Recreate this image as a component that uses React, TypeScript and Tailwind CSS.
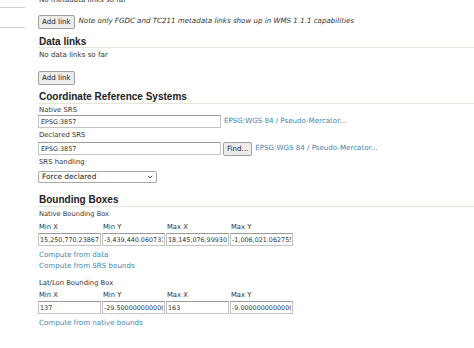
import React from "react";

const link = "text-[#3f88b0]";

function Heading({ children, className = "" }: { children: React.ReactNode; className?: string }) {
  return (
    <div
      className={`border-b border-[#e6e6d6] pl-[1px] text-[10px] font-bold text-[#222] ${className}`}
      style={{ fontFamily: "'Liberation Sans', Arial, sans-serif" }}
    >
      {children}
    </div>
  );
}

function Btn({ children, className = "" }: { children: React.ReactNode; className?: string }) {
  return (
    <button
      className={`h-[14px] rounded-[2px] border border-[#a0a0a0] bg-[#ececec] px-[3px] text-[7.1px] leading-[12px] text-[#222] ${className}`}
      style={{ fontFamily: "'DejaVu Sans', sans-serif" }}
    >
      {children}
    </button>
  );
}

function Field({ value, w, px = "px-[2px]" }: { value: string; w: string; px?: string }) {
  return (
    <input
      readOnly
      value={value}
      className={`${w} ${px} block h-[13px] border border-[#c4c4c4] border-t-[#9a9a9a] bg-white text-[6.4px] leading-[11px] text-[#333] outline-none`}
      style={{ fontFamily: "'DejaVu Sans', sans-serif" }}
    />
  );
}

function BBox({ values }: { values: string[] }) {
  const labels = ["Min X", "Min Y", "Max X", "Max Y"];
  return (
    <div className="grid grid-cols-[63px_63px_63px_63px] gap-x-px">
      {labels.map((l) => (
        <div key={l} className="h-[10px] pl-[1px] text-[6.8px] leading-[10px]">{l}</div>
      ))}
      {values.map((v, i) => (
        <div key={i} className="mt-[1px]"><Field value={v} w="w-[63px]" px="px-[1px]" /></div>
      ))}
    </div>
  );
}

export default function App() {
  return (
    <div
      className="flex h-[348px] w-[474px] overflow-hidden bg-white text-[7.1px] text-[#333]"
      style={{ fontFamily: "'DejaVu Sans', sans-serif" }}
    >
      <div className="w-[25px] shrink-0 pt-[7px]">
        <div className="h-[20px] border-t border-[#cfcfcf]" />
        <div className="border-t border-[#cfcfcf]" />
      </div>
      <div className="flex-1 pl-[13px]">
        <div className="-mt-[4px] h-[8px] pl-[1px] leading-[8px]">No metadata links so far</div>
        <div className="mt-[10px] flex h-[15px] items-center">
          <Btn>Add link</Btn>
          <span className="ml-[4px] italic">Note only FGDC and TC211 metadata links show up in WMS 1.1.1 capabilities</span>
        </div>
        <Heading className="mt-[7px] h-[12px] leading-[11px]">Data links</Heading>
        <div className="mt-[2px] h-[9px] pl-[1px] leading-[9px]">No data links so far</div>
        <div className="mt-[11px] flex h-[15px] items-center">
          <Btn>Add link</Btn>
        </div>
        <Heading className="mt-[6px] h-[13px] leading-[12px]">Coordinate Reference Systems</Heading>
        <div className="mt-[1px] h-[10px] pl-[1px] text-[6.9px] leading-[10px]">Native SRS</div>
        <div className="flex h-[13px] items-center">
          <Field value="EPSG:3857" w="w-[183px]" />
          <span className={`ml-[3px] ${link}`}>EPSG:WGS 84 / Pseudo-Mercator...</span>
        </div>
        <div className="mt-[2px] h-[10px] pl-[1px] text-[6.9px] leading-[10px]">Declared SRS</div>
        <div className="mt-[2px] flex h-[13px] items-center">
          <Field value="EPSG:3857" w="w-[183px]" />
          <Btn className="ml-[2px]">Find...</Btn>
          <span className={`ml-[3px] ${link}`}>EPSG:WGS 84 / Pseudo-Mercator...</span>
        </div>
        <div className="mt-[2px] h-[10px] pl-[1px] text-[6.9px] leading-[10px]">SRS handling</div>
        <div className="mt-[4px] flex h-[12px] w-[119px] items-center justify-between rounded-[2px] border border-[#a9a9a9] bg-white px-[3px] text-[7.4px] text-[#222]">
          <span>Force declared</span>
          <svg width="6" height="4" viewBox="0 0 6 4"><path d="M0.8 0.8 L3 3 L5.2 0.8" fill="none" stroke="#444" strokeWidth="0.9" /></svg>
        </div>
        <Heading className="mt-[11px] h-[13px] leading-[12px]">Bounding Boxes</Heading>
        <div className="mt-[2px] h-[10px] pl-[1px] text-[6.7px] leading-[10px]">Native Bounding Box</div>
        <div className="mt-[3px]">
          <BBox values={["15,250,770.238671", "-3,439,440.060731", "18,145,076.999303", "-1,006,021.062755"]} />
        </div>
        <div className={`mt-[3px] h-[11px] pl-[1px] leading-[11px] ${link}`}>Compute from data</div>
        <div className={`h-[11px] pl-[1px] leading-[11px] ${link}`}>Compute from SRS bounds</div>
        <div className="mt-[7px] h-[10px] pl-[1px] text-[6.8px] leading-[10px]">Lat/Lon Bounding Box</div>
        <div className="mt-[2px]">
          <BBox values={["137", "-29.500000000000", "163", "-9.0000000000000"]} />
        </div>
        <div className={`mt-[3px] h-[11px] pl-[1px] leading-[11px] ${link}`}>Compute from native bounds</div>
      </div>
    </div>
  );
}
